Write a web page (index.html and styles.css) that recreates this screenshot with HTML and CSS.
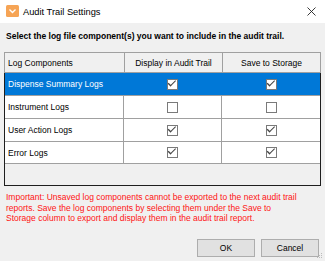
FILE: index.html
```html
<!DOCTYPE html>
<html>
<head>
<meta charset="utf-8">
<link rel="stylesheet" href="styles.css">
</head>
<body>
<div class="window">
  <div class="titlebar">
    <svg class="app-icon" width="13" height="12" viewBox="0 0 13 12">
      <rect x="0" y="0" width="13" height="12" rx="1.5" fill="#f6a455"/>
      <path d="M3.5 4.5 L6.5 7.5 L9.5 4.5" fill="none" stroke="#fff" stroke-width="1.4"/>
    </svg>
    <span class="title">Audit Trail Settings</span>
    <svg class="close" width="9" height="9" viewBox="0 0 9 9">
      <path d="M0.5 0.5 L8.5 8.5 M8.5 0.5 L0.5 8.5" stroke="#222" stroke-width="0.9"/>
    </svg>
  </div>
  <div class="content">
    <p class="prompt">Select the log file component(s) you want to include in the audit trail.</p>
    <div class="grid">
      <div class="grid-header">
        <div class="hcell">Log Components</div>
        <div class="hcell center">Display in Audit Trail</div>
        <div class="hcell center last">Save to Storage</div>
      </div>
      <div class="grid-body">
        <div class="row selected">
          <div class="cell">Dispense Summary Logs</div>
          <div class="cell center"><span class="cb checked"></span></div>
          <div class="cell center last"><span class="cb checked"></span></div>
        </div>
        <div class="row">
          <div class="cell">Instrument Logs</div>
          <div class="cell center"><span class="cb"></span></div>
          <div class="cell center last"><span class="cb"></span></div>
        </div>
        <div class="row">
          <div class="cell">User Action Logs</div>
          <div class="cell center"><span class="cb checked"></span></div>
          <div class="cell center last"><span class="cb checked"></span></div>
        </div>
        <div class="row">
          <div class="cell">Error Logs</div>
          <div class="cell center"><span class="cb checked"></span></div>
          <div class="cell center last"><span class="cb checked"></span></div>
        </div>
      </div>
    </div>
    <p class="note">Important: Unsaved log components cannot be exported to the next audit trail<br>reports. Save the log components by selecting them under the Save to<br>Storage column to export and display them in the audit trail report.</p>
    <div class="buttons">
      <button class="btn">OK</button>
      <button class="btn">Cancel</button>
    </div>
  </div>
  <svg class="grip" width="6" height="6" viewBox="0 0 6 6">
    <rect x="4" y="0" width="1" height="1" fill="#bbb"/>
    <rect x="2" y="2" width="1" height="1" fill="#bbb"/>
    <rect x="4" y="2" width="1" height="1" fill="#bbb"/>
    <rect x="0" y="4" width="1" height="1" fill="#bbb"/>
    <rect x="2" y="4" width="1" height="1" fill="#bbb"/>
    <rect x="4" y="4" width="1" height="1" fill="#bbb"/>
  </svg>
</div>
</body>
</html>
```

FILE: styles.css
```css
* { box-sizing: border-box; }
html, body { margin: 0; padding: 0; }
body {
  width: 325px;
  height: 261px;
  overflow: hidden;
  background: #f0f0f0;
  font-family: "Liberation Sans", Arial, sans-serif;
  font-size: 8.5px;
  color: #000;
}
.window {
  position: relative;
  width: 325px;
  height: 261px;
}
.titlebar {
  height: 23px;
  background: #fff;
  display: flex;
  align-items: center;
  padding-left: 6px;
}
.app-icon { display: block; margin-top: -1px; }
.title {
  margin-left: 4px;
  font-size: 9.3px;
  color: #000;
  flex: 1;
}
.close { display: block; margin-right: 9px; }
.content {
  padding: 0 4px;
}
.prompt {
  margin: 8px 0 0 2px;
  font-weight: bold;
  line-height: 10px;
  height: 10px;
}
.grid {
  margin-top: 11px;
  width: 317px;
}
.grid-header {
  display: grid;
  grid-template-columns: 120px 98px 1fr;
  height: 21px;
  border: 1px solid #a0a0a0;
  border-right-color: #a0a0a0;
}
.hcell {
  display: flex;
  align-items: center;
  padding-left: 3px;
  border-right: 1px solid #a0a0a0;
  white-space: nowrap;
}
.hcell.center, .cell.center { justify-content: center; padding-left: 0; }
.hcell.last, .cell.last { border-right: none; }
.grid-body {
  height: 113px;
  border: 1px solid #1e1e1e;
  border-top: none;
  background: #f0f0f0;
}
.row {
  display: grid;
  grid-template-columns: 119px 98px 1fr;
  height: 23px;
  background: #fff;
  border-bottom: 1px solid #a0a0a0;
}
.row:last-child { height: 22px; }
.cell {
  display: flex;
  align-items: center;
  padding-left: 3px;
  border-right: 1px solid #a0a0a0;
  white-space: nowrap;
}
.row.selected {
  background: #0078d7;
  color: #fff;
}
.row.selected .cell { border-right-color: #0078d7; }
.cb {
  display: block;
  width: 11px;
  height: 11px;
  border: 1px solid #7a7a7a;
  background: #fff;
  position: relative;
}
.cb.checked::after {
  content: "";
  position: absolute;
  left: 2px;
  top: 1px;
  width: 5px;
  height: 3px;
  border-left: 1px solid #444;
  border-bottom: 1px solid #444;
  transform: translate(0.5px, 1.5px) rotate(-45deg) scaleX(1.3);
  transform-origin: 0 100%;
}
.note {
  margin: 6px 0 0 2px;
  color: #ff1414;
  line-height: 10.5px;
}
.buttons {
  display: flex;
  justify-content: flex-end;
  gap: 6px;
  margin-top: 15px;
  padding-right: 2px;
}
.btn {
  width: 58px;
  height: 18px;
  background: #e1e1e1;
  border: 1px solid #adadad;
  font-family: "Liberation Sans", Arial, sans-serif;
  font-size: 8.5px;
  color: #000;
  padding: 0;
}
.grip {
  position: absolute;
  right: 2px;
  bottom: 2px;
}
```
